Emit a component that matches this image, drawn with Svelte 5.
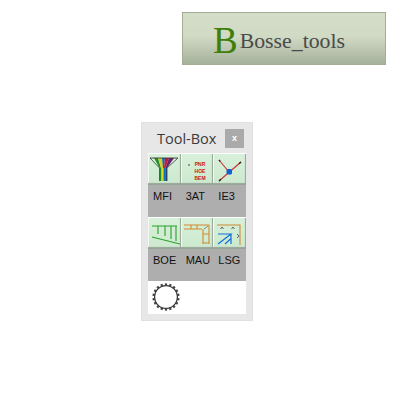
<script>
  const groups = [
    [{ id: 'mfi', label: 'MFI' }, { id: 'at', label: '3AT' }, { id: 'ie', label: 'IE3' }],
    [{ id: 'boe', label: 'BOE' }, { id: 'mau', label: 'MAU' }, { id: 'lsg', label: 'LSG' }]
  ];
  const angles = Array.from({ length: 18 }, (_, i) => i * 20);
</script>

{#snippet icon(id)}
  <svg viewBox="0 0 32 30" width="32" height="30">
    {#if id === 'mfi'}
      <path d="M6 3H10L13 13H11.5Z" fill="#1f8f30"/>
      <path d="M10 3H14L15 13H13Z" fill="#d8d020"/>
      <path d="M14 3H17L16 13H15Z" fill="#2060c0"/>
      <path d="M17 3H21L17.5 13H16Z" fill="#c02030"/>
      <path d="M21 3H26L19 13H17.5Z" fill="#6a2070"/>
      <rect x="11.5" y="13" width="2" height="13" fill="#1a8a30"/>
      <rect x="13.5" y="13" width="2" height="13" fill="#e0d820"/>
      <rect x="15.5" y="13" width="2" height="13" fill="#1070c0"/>
      <rect x="17.5" y="13" width="1.5" height="13" fill="#103080"/>
      <path d="M2 3L11.5 13V26M30 3L19 13V26" fill="none" stroke="#45554a" stroke-width="0.9"/>
      <path d="M2 3H30" stroke="#3a3a3a" stroke-width="0.9"/>
    {:else if id === 'at'}
      <circle cx="8" cy="10" r="0.8" fill="#333"/>
      <text x="19" y="11" class="red">PNR</text>
      <text x="19" y="18" class="red">HOE</text>
      <text x="19" y="25" class="red">BEM</text>
    {:else if id === 'ie'}
      <path d="M5 5L15 17M27 7L5 26" stroke="#c83030" stroke-width="1.1" fill="none"/>
      <path d="M25 8.7L27 7M5 26L7 24.3M5 5L6.2 6.4" stroke="#222" stroke-width="1.3" fill="none"/>
      <rect x="12.5" y="14" width="5.5" height="5.5" rx="1.5" fill="#1060d0"/>
    {:else if id === 'boe'}
      <path d="M4 7H29M10 7V15M17 7V17M23 7V20M28 7V22M4 18L32 25" stroke="#2aa02a" stroke-width="1.1" fill="none"/>
    {:else if id === 'mau'}
      <path d="M3 6H28M3 10H21M10 6V10M16 6V10M22 10V25M28 6V25M22 15H28M22 24H28" stroke="#d08a30" stroke-width="1.1" fill="none"/>
      <path d="M23 10L27 7" stroke="#777" stroke-width="0.9"/>
    {:else}
      <path d="M3 6H26V26" stroke="#d08a30" stroke-width="1.1" fill="none"/>
      <path d="M6.5 10L8 8L9.5 10M17.5 10L19 8L20.5 10M23 15L25 17L23 19" stroke="#555" stroke-width="0.9" fill="none"/>
      <path d="M4 15H17L4 25M11 25L17 19.5M17 15V25" stroke="#1070e0" stroke-width="1.2" fill="none"/>
    {/if}
  </svg>
{/snippet}

<div class="page">
  <header class="banner">
    <span class="mark">B</span><span class="name">Bosse_tools</span>
  </header>

  <section class="panel">
    <div class="head">
      <h2>Tool-Box</h2>
      <button class="close">x</button>
    </div>
    <div class="body">
      {#each groups as group}
        <div class="group">
          {#each group as tool}
            <div class="tool">
              <button class="btn">{@render icon(tool.id)}</button>
              <span>{tool.label}</span>
            </div>
          {/each}
        </div>
      {/each}
      <div class="foot">
        <svg viewBox="0 0 30 30" width="30" height="30">
          <circle cx="15" cy="15" r="11.4" fill="none" stroke="#333" stroke-width="1.2"/>
          {#each angles as a}
            <rect x="13.9" y="1.4" width="2.2" height="2.6" fill="#444" transform="rotate({a} 15 15)"/>
          {/each}
        </svg>
      </div>
    </div>
  </section>
</div>

<style>
  :global(body) { margin: 0; background: #fff; }
  .page {
    width: 400px;
    height: 400px;
    box-sizing: border-box;
    padding-top: 12px;
    display: flex;
    flex-direction: column;
  }
  .banner {
    width: 204px;
    height: 53px;
    margin-left: 182px;
    box-sizing: border-box;
    border: 1px solid #a3ac95;
    background: linear-gradient(#d3ddc8 0%, #d0dac5 45%, #a6b19c 100%);
    display: flex;
    align-items: center;
    padding: 4px 0 0 30px;
    font-family: "Liberation Serif", serif;
  }
  .mark { font-size: 37px; color: #3f7f08; line-height: 1; margin-right: 2px; }
  .name { font-size: 21.8px; color: #4a4a4a; padding-top: 1px; }
  .panel {
    width: 112px;
    height: 199px;
    margin: 57px 0 0 141px;
    box-sizing: border-box;
    background: #e7e7e7;
    border: 1px solid #e0e0e0;
    padding: 0 6px;
  }
  .head {
    height: 30px;
    display: flex;
    align-items: center;
    justify-content: space-between;
  }
  h2 {
    margin: 0 0 0 9px;
    font-size: 14.5px;
    font-weight: 400;
    color: #3a3a3a;
    font-family: "Open Sans", sans-serif;
  }
  .close {
    width: 19px;
    height: 19px;
    padding: 0;
    border: 0;
    margin-right: 2px;
    background: #aaa;
    color: #fff;
    font: bold 9px "Liberation Sans", sans-serif;
  }
  .body { width: 98px; background: #fff; }
  .group {
    display: grid;
    grid-template-columns: repeat(3, 1fr);
    height: 64px;
    background: #aeaeae;
  }
  .tool { display: flex; flex-direction: column; }
  .tool span {
    font: 11px "Liberation Sans", sans-serif;
    color: #111;
    margin: 5px 0 0 5px;
  }
  .btn {
    width: 100%;
    height: 32px;
    padding: 0;
    border: 0;
    border-top: 1px solid #fff;
    background: linear-gradient(#d8f0da, #cbe9ce);
    box-shadow: inset -1px -2px 1px #98a398, inset 1px 0 0 #f2faf2;
    display: flex;
    align-items: center;
    justify-content: center;
    overflow: hidden;
  }
  .red {
    font: bold 5px "Liberation Sans", sans-serif;
    fill: #cc1420;
    text-anchor: middle;
  }
  .foot { height: 33px; background: #fff; padding: 1px 0 0 3px; box-sizing: border-box; }
  .foot svg { display: block; }
</style>
